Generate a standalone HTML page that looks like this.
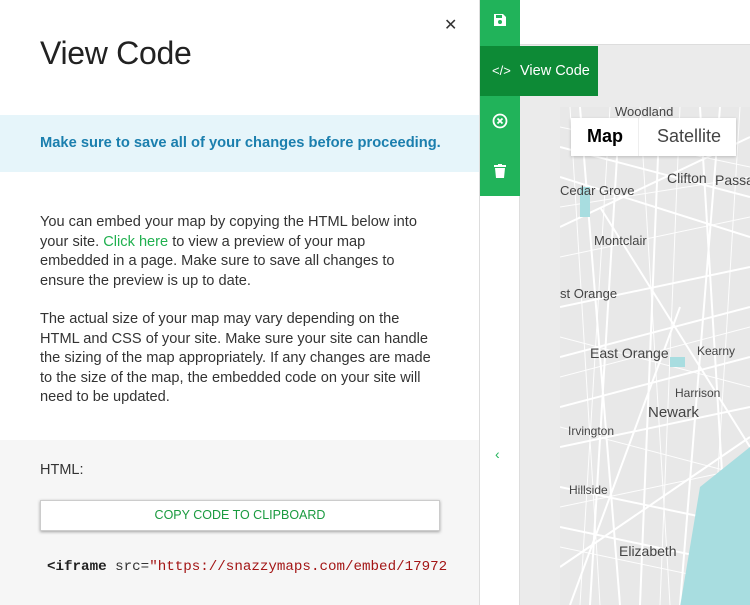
<!DOCTYPE html>
<html><head><meta charset="utf-8"><style>
*{margin:0;padding:0;box-sizing:border-box}
body{width:750px;height:605px;overflow:hidden;position:relative;font-family:"Liberation Sans",sans-serif;background:#ebebeb}
.left{position:absolute;left:0;top:0;width:480px;height:605px;background:#fff;border-right:1px solid #ddd;overflow:hidden}
h1{position:absolute;left:40px;top:35px;font-size:32px;font-weight:400;color:#222;letter-spacing:-0.3px}
.x{position:absolute;left:444px;top:15px;font-size:16px;color:#333}
.warn{position:absolute;left:0;top:115px;width:480px;height:57px;background:#e6f5fa;color:#1b7fae;font-weight:bold;font-size:14.7px;padding:20px 40px;white-space:nowrap}
.txt{position:absolute;left:40px;top:213px;width:430px;font-size:14.6px;line-height:19.5px;color:#333}
.txt p{margin-bottom:19px}
.txt a{color:#20b04f;text-decoration:none}
.bot{position:absolute;left:0;top:440px;width:480px;height:165px;background:#f6f6f6}
.html{position:absolute;left:40px;top:22px;font-size:14.5px;color:#333}
.btn{position:absolute;left:40px;top:60px;width:400px;height:31px;background:#fff;border:1px solid #ccc;box-shadow:0 1px 3px rgba(0,0,0,.35);color:#1a9a3f;font-size:12.5px;text-align:center;line-height:29px}
.code{position:absolute;left:47px;top:119px;font-family:"Liberation Mono",monospace;font-size:14.2px;color:#333;white-space:nowrap}
.code b{color:#222}.code span{color:#a31515}
.side{position:absolute;left:480px;top:0;width:40px;height:196px;background:#21b35a}
.side2{position:absolute;left:480px;top:196px;width:40px;height:409px;background:#fff;border-right:1px solid #ddd}
.vc{position:absolute;left:480px;top:46px;width:118px;height:50px;background:#0d8a36;color:#fff;font-size:14.5px;line-height:50px;padding-left:40px}
.topw{position:absolute;left:520px;top:0;width:230px;height:45px;background:#fff;border-bottom:1px solid #ddd}
.map{position:absolute;left:560px;top:107px;width:190px;height:498px;background:#e8e8e8;overflow:hidden}
.mt{position:absolute;left:571px;top:118px;width:165px;height:38px;background:#fff;box-shadow:0 1px 3px rgba(0,0,0,.2);font-size:18px}
.mt div{position:absolute;top:8px}
.lbl{position:absolute;font-size:13px;color:#444;white-space:nowrap}
</style></head><body>
<div class="left">
<h1>View Code</h1><div class="x">✕</div>
<div class="warn">Make sure to save all of your changes before proceeding.</div>
<div class="txt"><p>You can embed your map by copying the HTML below into<br>your site. <a>Click here</a> to view a preview of your map<br>embedded in a page. Make sure to save all changes to<br>ensure the preview is up to date.</p><p>The actual size of your map may vary depending on the<br>HTML and CSS of your site. Make sure your site can handle<br>the sizing of the map appropriately. If any changes are made<br>to the size of the map, the embedded code on your site will<br>need to be updated.</p></div>
<div class="bot"><div class="html">HTML:</div><div class="btn">COPY CODE TO CLIPBOARD</div>
<div class="code"><b>&lt;iframe</b> src=<span>"https://snazzymaps.com/embed/17972</span></div></div>
</div>
<div class="topw"></div>
<div class="side"></div><div class="side2"><div style="position:absolute;left:15px;top:250px;color:#21b35a;font-size:14px">‹</div></div>
<svg style="position:absolute;left:493px;top:13px" width="14" height="14" viewBox="0 0 14 14"><path d="M1 1h9l3 3v9H1z" fill="#fff"/><rect x="3" y="2" width="6" height="3" fill="#21b35a"/><circle cx="7" cy="9" r="2" fill="#21b35a"/></svg>
<div class="vc"><span style="position:absolute;left:12px;font-size:13px">&lt;/&gt;</span>View Code</div>
<svg style="position:absolute;left:492px;top:113px" width="16" height="16" viewBox="0 0 16 16"><circle cx="8" cy="8" r="6.5" fill="none" stroke="#fff" stroke-width="1.8"/><path d="M5.5 5.5l5 5M10.5 5.5l-5 5" stroke="#fff" stroke-width="1.8"/></svg>
<svg style="position:absolute;left:494px;top:164px" width="12" height="14" viewBox="0 0 12 14"><rect x="0" y="1" width="12" height="2" fill="#fff"/><rect x="4" y="0" width="4" height="2" fill="#fff"/><path d="M1 4h10l-1 10H2z" fill="#fff"/></svg>
<div class="map"><svg width="190" height="498" style="position:absolute;left:0;top:0">
<g stroke="#fff" stroke-width="2" fill="none">
<path d="M0 40L190 90M20 0L60 498M100 0L80 498M0 200L190 160M0 300L190 250M0 380L190 420M140 0L170 498M0 120L190 30M40 100L190 340M0 460L190 330M120 200L10 498M0 70L190 130M0 250L190 200M60 0L30 498M0 340L190 300M160 0L120 498M0 420L190 460"/></g>
<g stroke="#fff" stroke-width="1" fill="none" opacity=".9">
<path d="M0 20L190 60M0 100L190 70M0 150L190 110M0 230L190 280M0 270L190 220M0 320L190 370M0 400L190 360M0 440L190 480M10 0L40 498M50 0L20 498M80 0L110 498M120 0L100 498M180 0L150 498"/></g>
<g fill="#a8dde0"><path d="M140 380l50-40v160h-70z"/><rect x="20" y="80" width="10" height="30"/><rect x="110" y="250" width="15" height="10"/></g></svg>
<div class="lbl" style="left:55px;top:-3px">Woodland</div>
<div class="lbl" style="left:107px;top:63px;font-size:14px">Clifton</div><div class="lbl" style="left:155px;top:65px;font-size:14px">Passa</div>
<div class="lbl" style="left:0;top:76px">Cedar Grove</div>
<div class="lbl" style="left:34px;top:126px">Montclair</div>
<div class="lbl" style="left:0;top:179px">st Orange</div>
<div class="lbl" style="left:30px;top:238px;font-size:14px">East Orange</div><div class="lbl" style="left:137px;top:237px;font-size:12px">Kearny</div>
<div class="lbl" style="left:115px;top:279px;font-size:12px">Harrison</div>
<div class="lbl" style="left:88px;top:297px;font-size:15px">Newark</div>
<div class="lbl" style="left:8px;top:317px;font-size:12px">Irvington</div>
<div class="lbl" style="left:9px;top:376px;font-size:12px">Hillside</div>
<div class="lbl" style="left:59px;top:436px;font-size:14px">Elizabeth</div>
</div>
<div class="mt"><div style="left:16px;font-weight:bold">Map</div><div style="left:86px;color:#444">Satellite</div><span style="position:absolute;left:67px;top:0;width:1px;height:38px;background:#eee"></span></div>
</body></html>
